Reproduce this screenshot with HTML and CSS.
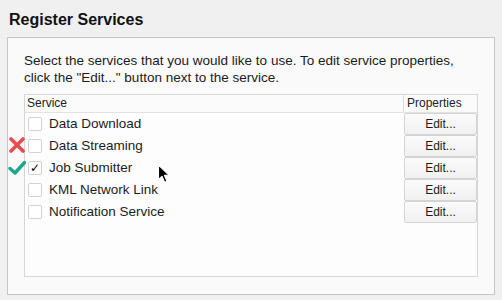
FILE: index.html
```html
<!DOCTYPE html>
<html>
<head>
<meta charset="utf-8">
<link rel="stylesheet" href="styles.css">
</head>
<body>
<h1 class="title">Register Services</h1>
<div class="group">
  <p class="desc">Select the services that you would like to use. To edit service properties,<br>click the "Edit..." button next to the service.</p>
  <div class="table">
    <div class="head">
      <div class="hcell hservice">Service</div>
      <div class="hcell hprops">Properties</div>
    </div>
    <div class="rows">
      <div class="row">
        <span class="cb"></span><span class="label">Data Download</span>
        <button class="edit">Edit...</button>
      </div>
      <div class="row">
        <svg class="mark mark-x" width="16" height="16" viewBox="0 0 16 16"><path d="M2 2 L14 14 M14 2 L2 14" stroke="#ee4a4f" stroke-width="3.6" stroke-linecap="round"/></svg>
        <span class="cb"></span><span class="label">Data Streaming</span>
        <button class="edit">Edit...</button>
      </div>
      <div class="row">
        <svg class="mark mark-ok" width="18" height="16" viewBox="0 0 18 16"><path d="M2 8.5 L7 13 L16.5 2.5" fill="none" stroke="#1aa98a" stroke-width="3.4" stroke-linecap="round" stroke-linejoin="round"/></svg>
        <span class="cb checked">✓</span><span class="label">Job Submitter</span>
        <button class="edit">Edit...</button>
        <svg class="cursor" width="14" height="20" viewBox="0 0 14 20"><path d="M1.5 1 L1.5 15.5 L5 12.3 L7.6 18.3 L10 17.2 L7.4 11.4 L12 11.2 Z" fill="#000" stroke="#fff" stroke-width="1.1" stroke-linejoin="round"/></svg>
      </div>
      <div class="row">
        <span class="cb"></span><span class="label">KML Network Link</span>
        <button class="edit">Edit...</button>
      </div>
      <div class="row">
        <span class="cb"></span><span class="label">Notification Service</span>
        <button class="edit">Edit...</button>
      </div>
    </div>
  </div>
</div>
</body>
</html>
```
FILE: styles.css
```css
html, body {
  margin: 0;
  padding: 0;
  background: #f0f0f0;
  font-family: "Liberation Sans", Arial, sans-serif;
  color: #1a1a1a;
}
.title {
  margin: 0;
  padding: 10px 0 0 9px;
  height: 27px;
  font-size: 16px;
  font-weight: bold;
  line-height: 20px;
  color: #111;
}
.group {
  margin: 0 7px;
  height: 256px;
  border: 1px solid #c6c6c6;
  background: #fafafa;
  padding: 0 16px;
  box-sizing: content-box;
  width: 454px;
  display: flex;
  flex-direction: column;
}
.desc {
  margin: 0;
  padding-top: 15px;
  font-size: 13.5px;
  line-height: 16.5px;
  height: 41px;
  color: #1b1b1b;
  white-space: nowrap;
}
.table {
  border: 1px solid #d6d6d6;
  background: #fdfdfd;
  height: 181px;
  display: flex;
  flex-direction: column;
}
.head {
  display: flex;
  height: 17px;
  border-bottom: 1px solid #e2e2e2;
  background: #fbfbfb;
  font-size: 12px;
  line-height: 17px;
  color: #222;
}
.hservice {
  flex: 1;
  padding-left: 2px;
}
.hprops {
  width: 70px;
  border-left: 1px solid #dcdcdc;
  padding-left: 3px;
}
.rows {
  display: flex;
  flex-direction: column;
}
.row {
  position: relative;
  display: flex;
  align-items: center;
  height: 22px;
  font-size: 13.5px;
  line-height: 15px;
}
.cb {
  width: 12px;
  height: 12px;
  margin-left: 3px;
  margin-right: 7px;
  border: 1px solid #d2d2d2;
  border-radius: 2px;
  background: #fff;
  font-size: 12px;
  line-height: 12px;
  text-align: center;
  color: #000;
  font-weight: bold;
  font-family: "DejaVu Sans", sans-serif;
}
.label {
  flex: 1;
  color: #1c1c1c;
  padding-bottom: 2px;
}
.edit {
  width: 73px;
  height: 22px;
  margin: 0;
  border: 1px solid #d4d4d4;
  border-radius: 2px;
  background: linear-gradient(#fbfbfb, #f1f1f1);
  font-family: "Liberation Sans", Arial, sans-serif;
  font-size: 12px;
  color: #1c1c1c;
  padding: 0 0 1px 0;
}
.mark {
  position: absolute;
}
.mark-x {
  left: -16px;
  top: 2px;
}
.mark-ok {
  left: -17px;
  top: 3px;
}
.cursor {
  position: absolute;
  left: 132px;
  top: 7px;
}
```
